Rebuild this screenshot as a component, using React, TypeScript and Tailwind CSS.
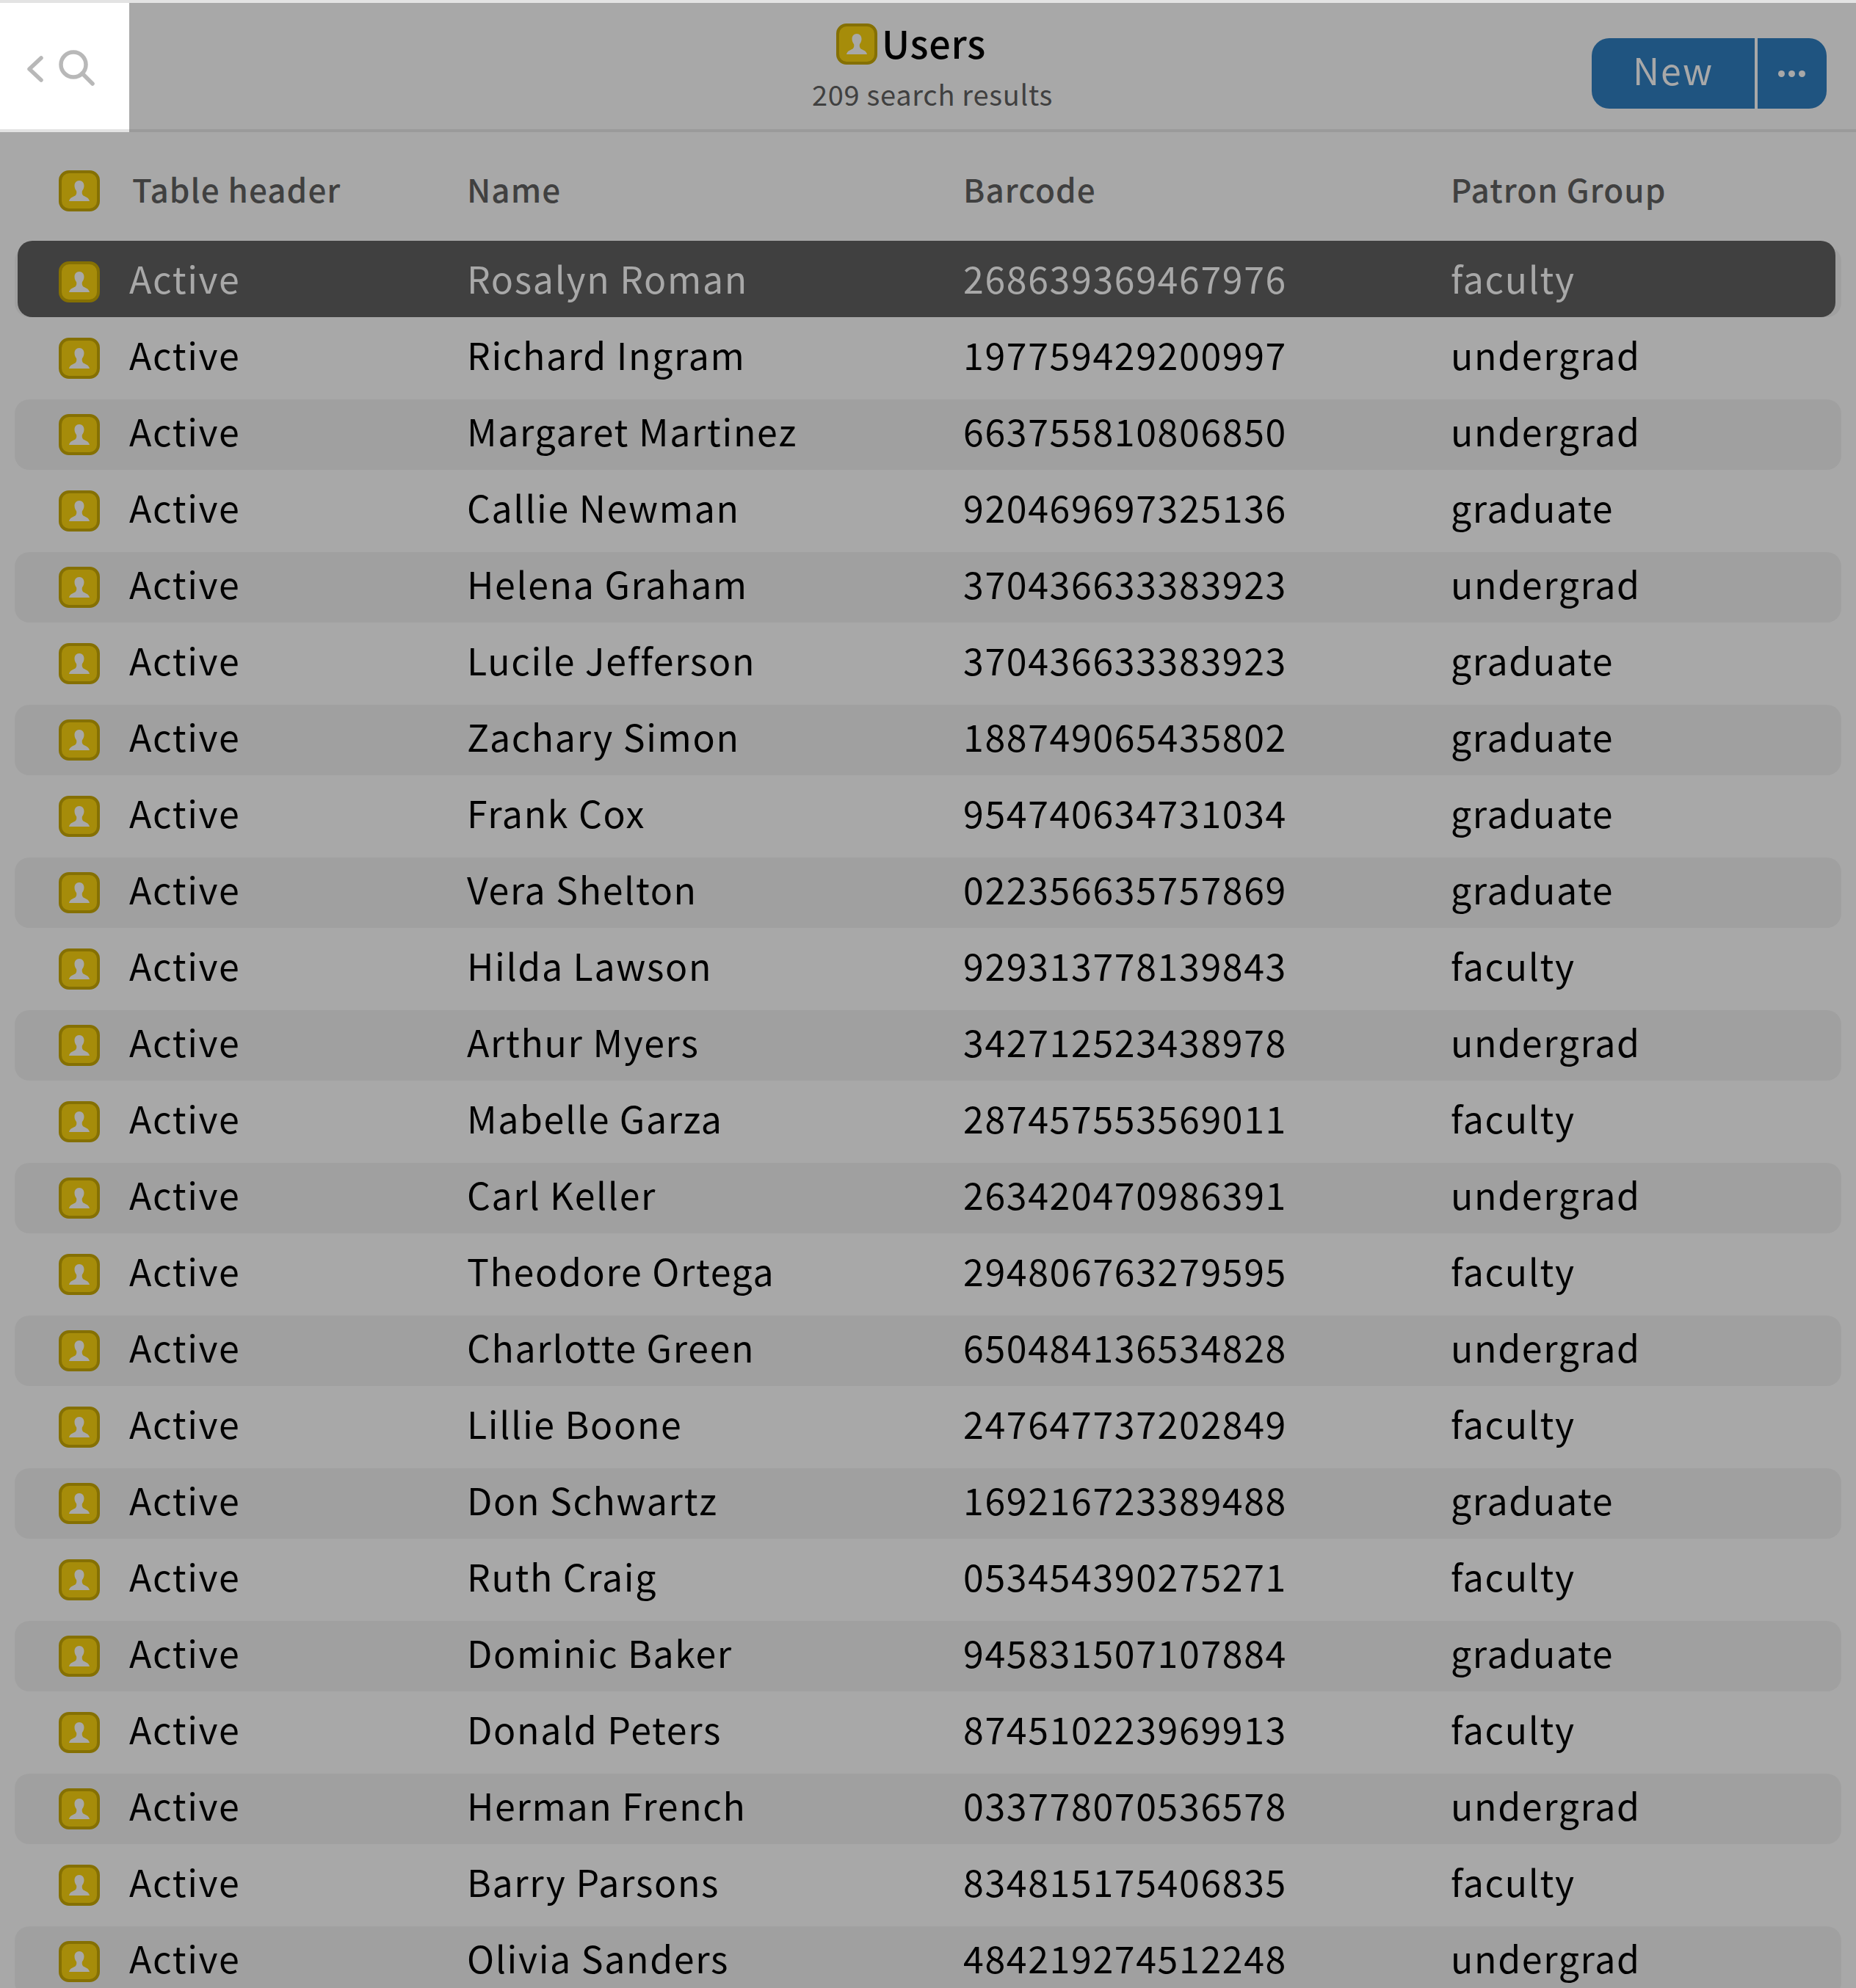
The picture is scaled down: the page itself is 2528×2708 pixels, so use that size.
const font = { fontFamily: '"Noto Sans CJK SC", "Noto Sans", sans-serif' };

const rows: [string, string, string][] = [
  ["Rosalyn Roman", "268639369467976", "faculty"],
  ["Richard Ingram", "197759429200997", "undergrad"],
  ["Margaret Martinez", "663755810806850", "undergrad"],
  ["Callie Newman", "920469697325136", "graduate"],
  ["Helena Graham", "370436633383923", "undergrad"],
  ["Lucile Jefferson", "370436633383923", "graduate"],
  ["Zachary Simon", "188749065435802", "graduate"],
  ["Frank Cox", "954740634731034", "graduate"],
  ["Vera Shelton", "022356635757869", "graduate"],
  ["Hilda Lawson", "929313778139843", "faculty"],
  ["Arthur Myers", "342712523438978", "undergrad"],
  ["Mabelle Garza", "287457553569011", "faculty"],
  ["Carl Keller", "263420470986391", "undergrad"],
  ["Theodore Ortega", "294806763279595", "faculty"],
  ["Charlotte Green", "650484136534828", "undergrad"],
  ["Lillie Boone", "247647737202849", "faculty"],
  ["Don Schwartz", "169216723389488", "graduate"],
  ["Ruth Craig", "053454390275271", "faculty"],
  ["Dominic Baker", "945831507107884", "graduate"],
  ["Donald Peters", "874510223969913", "faculty"],
  ["Herman French", "033778070536578", "undergrad"],
  ["Barry Parsons", "834815175406835", "faculty"],
  ["Olivia Sanders", "484219274512248", "undergrad"],
];

function UserIcon() {
  return (
    <div className="flex h-[56px] w-[56px] shrink-0 items-center justify-center rounded-[14px] border-[4px] border-[#857003] bg-[#a68c0a]">
      <svg width="28" height="28" viewBox="0 0 28 28" fill="#a8a8a8">
        <path d="M14 0C10 0 7.500 3 7.500 7c0 3 1.200 5.500 2.500 7 .5 2 .5 4-1 6-2 2-8 2.500-9 8h28c-1-5.500-7-6-9-8-1.500-2-1.500-4-1-6 1.300-1.500 2.500-4 2.500-7 0-4-2.500-7-6.500-7z" />
      </svg>
    </div>
  );
}

function Cells({ name, barcode, group }: { name: string; barcode: string; group: string }) {
  return (
    <div className="flex h-[96px] items-center text-[50px] tracking-[1.65px]">
      <UserIcon />
      <div className="ml-[40px] w-[460px] pb-[11px]">Active</div>
      <div className="w-[676px] pb-[11px]">{name}</div>
      <div className="w-[664px] pb-[11px]">{barcode}</div>
      <div className="pb-[11px]">{group}</div>
    </div>
  );
}

export default function App() {
  return (
    <div className="h-[2708px] w-[2528px] overflow-hidden bg-[#a8a8a8]" style={font}>
      <div className="h-[4px] bg-[#e3e3e3]" />
      <header className="flex h-[176px] items-stretch">
        <div className="flex w-[176px] shrink-0 items-start gap-[21px] border-b-[4px] border-[#e3e3e3] bg-white pl-[37px] pt-[64px]">
          <svg width="22" height="36" viewBox="0 0 22 36" fill="none" stroke="#b8b8b8" strokeWidth="5.5" strokeLinecap="round" strokeLinejoin="round" className="mt-[8px]">
            <path d="M19 3 3 18l16 15" />
          </svg>
          <svg width="50" height="50" viewBox="0 0 50 50" fill="none" stroke="#b8b8b8" strokeWidth="5.5" strokeLinecap="round">
            <circle cx="20" cy="20" r="17" />
            <path d="M32 32 46 46" />
          </svg>
        </div>
        <div className="relative flex flex-1 flex-col items-center border-b-[4px] border-[#9a9a9a] pt-[28px]">
          <div className="mr-[176px] flex flex-col items-center">
            <div className="mr-[46px] flex h-[56px] items-center gap-[6px]">
              <UserIcon />
              <span className="pb-[4px] text-[52px] font-medium leading-[56px] tracking-[0.8px] text-black">Users</span>
            </div>
            <div className="ml-[12px] mt-[10px] text-[38px] leading-[60px] tracking-[0.7px] text-[#404040]">209 search results</div>
          </div>
          <div className="absolute right-[40px] top-[48px] flex h-[96px] text-[#a8a8a8]">
            <div className="flex w-[222px] items-center justify-center rounded-l-[24px] bg-[#1f5480] pb-[12px] text-[50px] tracking-[2px]">New</div>
            <div className="ml-[4px] flex w-[94px] items-center justify-center gap-[5px] rounded-r-[24px] bg-[#1f5480] pr-[2px]">
              <span className="h-[9px] w-[9px] rounded-full bg-[#a8a8a8]" />
              <span className="h-[9px] w-[9px] rounded-full bg-[#a8a8a8]" />
              <span className="h-[9px] w-[9px] rounded-full bg-[#a8a8a8]" />
            </div>
          </div>
        </div>
      </header>
      <div className="flex h-[148px] items-center pl-[80px] pt-[12px] text-[44px] font-medium tracking-[1.05px] text-[#404040]">
        <UserIcon />
        <div className="ml-[44px] w-[456px] pb-[6px]">Table header</div>
        <div className="w-[676px] pb-[6px]">Name</div>
        <div className="w-[664px] pb-[6px]">Barcode</div>
        <div className="pb-[6px]">Patron Group</div>
      </div>
      <div>
        {rows.map(([name, barcode, group], i) =>
          i === 0 ? (
            <div key={i} className="relative mx-[20px] h-[104px]">
              <div className="absolute inset-x-0 bottom-0 top-[8px] rounded-[20px] bg-[#a0a0a0]" />
              <div className="relative ml-[4px] mr-[8px] h-[104px] rounded-[20px] bg-[#404040] pl-[56px] pt-[8px] text-[#a8a8a8]">
                <Cells name={name} barcode={barcode} group={group} />
              </div>
            </div>
          ) : (
            <div key={i} className="mx-[20px] h-[104px] pt-[8px] text-black">
              <div className={i % 2 === 0 ? "rounded-[20px] bg-[#a0a0a0] pl-[60px]" : "pl-[60px]"}>
                <Cells name={name} barcode={barcode} group={group} />
              </div>
            </div>
          ),
        )}
      </div>
    </div>
  );
}
